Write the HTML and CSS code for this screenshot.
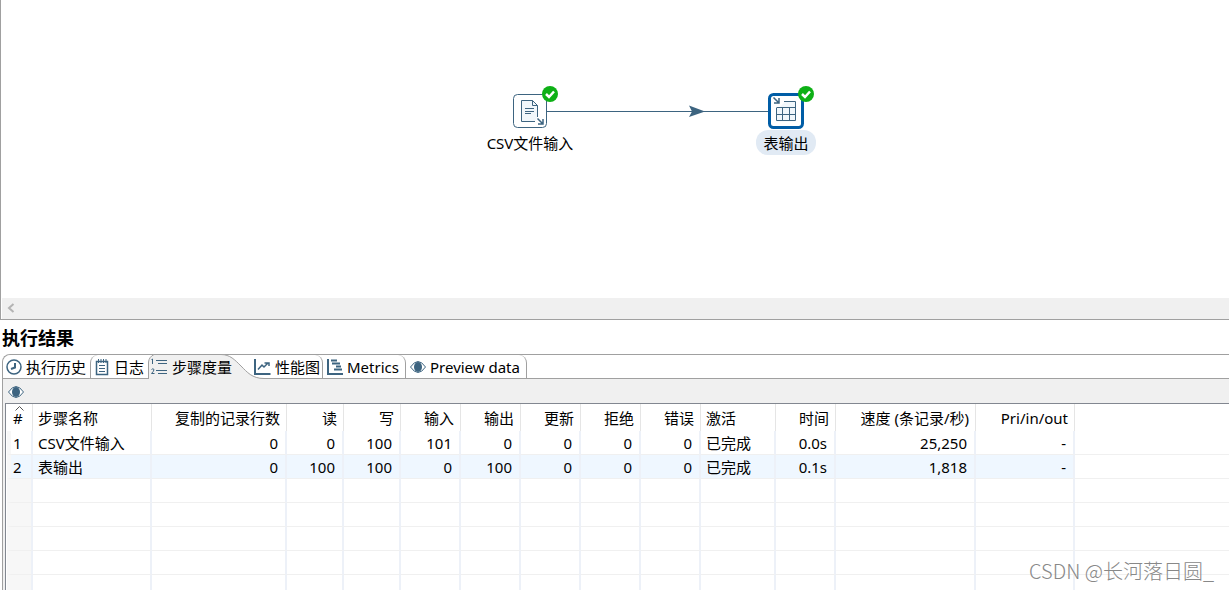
FILE: index.html
```html
<!DOCTYPE html>
<html lang="zh-CN">
  <head>
    <meta charset="utf-8">
    <title>执行结果</title>
    <link rel="stylesheet" href="styles.css">
  </head>
  <body>
    <main class="app">
      <section class="canvas">
        <div class="graph">
          <svg class="hop" width="222" height="12" viewBox="0 0 222 12">
            <path d="M0 6.5H222" stroke="#3d6480" stroke-width="1" />
            <path d="M142 .5L158 6.5L142 12L145 6.5Z" fill="#3d6480" />
          </svg>
          <div class="step step-input">
            <svg class="step-icon" width="46" height="44" viewBox="0 0 46 44">
              <rect x="6.5" y="9.5" width="33" height="33" rx="4" fill="#fff" stroke="#3d6480" />
              <path d="M28 36.5H14.500V15.500H25.500L30.500 20.500V32" fill="#f1f7fb" stroke="#3d6480" />
              <path d="M25.500 15.500V20.500H30.500M18 23.500H27M18 26.500H27M18 28.500H24" fill="none" stroke="#3d6480" />
              <path d="M30.500 33.500L35.500 38.500M36 34V39H31" fill="none" stroke="#3d6480" stroke-width="1.500" />
              <circle cx="43" cy="9" r="8" fill="#0eb016" />
              <path d="M39 9L42 12L47 6.500" fill="none" stroke="#fff" stroke-width="2.500" />
            </svg>
            <span class="step-name">CSV文件输入</span>
          </div>
          <div class="step step-output selected">
            <svg class="step-icon" width="46" height="44" viewBox="0 0 46 44">
              <rect x="6.5" y="9.5" width="33" height="33" rx="4" fill="#fff" stroke="#005da6" stroke-width="3" />
              <path d="M22 16.500H32.500V36.500H13.500V24L18 21Z" fill="#f1f7fb" />
              <path d="M21 16.500H32.500V35.500H13.500V23M13.500 22.500H32.500M13.500 29.500H32.500M19.500 22.500V35.500M26.500 22.500V35.500" fill="none" stroke="#3d6480" />
              <path d="M10.500 12.500L15.500 17.500M16 13V18H11" fill="none" stroke="#3d6480" stroke-width="1.500" />
              <circle cx="43" cy="9" r="8" fill="#0eb016" />
              <path d="M39 9L42 12L47 6.500" fill="none" stroke="#fff" stroke-width="2.500" />
            </svg>
            <span class="step-name">表输出</span>
          </div>
        </div>
        <div class="scrollbar">
          <button class="scroll-left" aria-label="向左滚动">
            <svg width="8" height="10" viewBox="0 0 8 10"><path d="M6.500 1L2 5L6.500 9" fill="none" stroke="#b4b4b4" stroke-width="2" /></svg>
          </button>
        </div>
      </section>

      <section class="results">
        <h1>执行结果</h1>
        <div class="folder">
          <div class="tabs" role="tablist">
            <button class="tab tab-history" role="tab">
              <svg width="16" height="16" viewBox="0 0 16 16"><circle cx="8" cy="8" r="7" fill="none" stroke="#3d6480" stroke-width="1.500" /><path d="M9 4V8.500L5 10" fill="none" stroke="#3d6480" stroke-width="2" /></svg>
              <span>执行历史</span>
            </button>
            <button class="tab tab-log" role="tab">
              <svg width="14" height="16" viewBox="0 0 14 16"><path d="M1.500 2.500H12.500V15.500H1.500Z" fill="none" stroke="#3d6480" stroke-width="1.500" /><path d="M3.500 0V4M6 0V4M8.500 0V4M11 0V4M4 6.500H10M4 9.500H10M4 12.500H10" stroke="#3d6480" /></svg>
              <span>日志</span>
            </button>
            <button class="tab tab-metrics active" role="tab" aria-selected="true">
              <svg class="tab-shape" width="116" height="25" viewBox="0 0 116 25">
                <path d="M.5 25V8Q1 3 6 .5H73C82 .5 87 6 93 12S104 24.500 116 24.500V25Z" fill="#f0f0f0" />
                <path d="M.5 25V8Q1 3 6 .5H73C82 .5 87 6 93 12S104 24.500 116 24.500" fill="none" stroke="#a0a0a0" />
              </svg>
              <svg width="17" height="17" viewBox="0 0 17 17"><path d="M5 2.500H16M7 5.500H16M5 12.500H16M7 15.500H16" stroke="#3d6480" /><path d="M.5 1.500L1.500 1V6M.5 11.500Q2 10 3 11.500Q3 13 .5 15.500H3.500" fill="none" stroke="#3d6480" /></svg>
              <span>步骤度量</span>
            </button>
            <button class="tab tab-chart" role="tab">
              <svg width="17" height="16" viewBox="0 0 17 16"><path d="M1 0V15H16.500" fill="none" stroke="#3d6480" stroke-width="2" /><path d="M4 10.500L8 6L10 8L14 4M10.500 4H15V7" fill="none" stroke="#3d6480" stroke-width="1.500" /></svg>
              <span>性能图</span>
            </button>
            <button class="tab tab-gantt" role="tab">
              <svg width="16" height="16" viewBox="0 0 16 16"><path d="M1 0V15H16" fill="none" stroke="#3d6480" stroke-width="2" /><path d="M4 1.500H10M5 4.500H13M9 7.500H14M7 10.500H15" stroke="#3d6480" stroke-width="2" /></svg>
              <span>Metrics</span>
            </button>
            <button class="tab tab-preview" role="tab">
              <svg width="16" height="12" viewBox="0 0 16 12"><path d="M.5 6Q8-5 15.500 6Q8 17 .5 6Z" fill="#fff" stroke="#3d6480" /><ellipse cx="8" cy="6" rx="4" ry="5" fill="#3d6480" /></svg>
              <span>Preview data</span>
            </button>
          </div>
          <div class="toolbar">
            <button class="show-all" aria-label="显示">
              <svg width="16" height="12" viewBox="0 0 16 12"><path d="M.5 6Q8-5 15.500 6Q8 17 .5 6Z" fill="#fff" stroke="#3d6480" /><ellipse cx="8" cy="6" rx="4" ry="5" fill="#3d6480" /></svg>
            </button>
          </div>
          <div class="grid">
            <table>
              <colgroup>
                <col class="w-num"><col class="w-name"><col class="w-copies">
                <col class="w-rw"><col class="w-rw">
                <col class="w-count"><col class="w-count"><col class="w-count"><col class="w-count"><col class="w-count">
                <col class="w-active"><col class="w-count"><col class="w-speed"><col class="w-prio"><col>
              </colgroup>
              <thead>
                <tr>
                  <th class="sorted">#<svg class="sort" width="9" height="5" viewBox="0 0 9 5"><path d="M.5 4.500L4.500 .5L8.500 4.500" fill="none" stroke="#555" /></svg></th>
                  <th class="text">步骤名称</th>
                  <th>复制的记录行数</th>
                  <th>读</th>
                  <th>写</th>
                  <th>输入</th>
                  <th>输出</th>
                  <th>更新</th>
                  <th>拒绝</th>
                  <th>错误</th>
                  <th class="text">激活</th>
                  <th>时间</th>
                  <th>速度 (条记录/秒)</th>
                  <th>Pri/in/out</th>
                  <th></th>
                </tr>
              </thead>
              <tbody>
                <tr><td>1</td><td class="text">CSV文件输入</td><td>0</td><td>0</td><td>100</td><td>101</td><td>0</td><td>0</td><td>0</td><td>0</td><td class="text">已完成</td><td>0.0s</td><td>25,250</td><td>-</td><td></td></tr>
                <tr class="alt"><td>2</td><td class="text">表输出</td><td>0</td><td>100</td><td>100</td><td>0</td><td>100</td><td>0</td><td>0</td><td>0</td><td class="text">已完成</td><td>0.1s</td><td>1,818</td><td>-</td><td></td></tr>
                <tr class="empty"><td></td><td></td><td></td><td></td><td></td><td></td><td></td><td></td><td></td><td></td><td></td><td></td><td></td><td></td><td></td></tr>
                <tr class="empty"><td></td><td></td><td></td><td></td><td></td><td></td><td></td><td></td><td></td><td></td><td></td><td></td><td></td><td></td><td></td></tr>
                <tr class="empty"><td></td><td></td><td></td><td></td><td></td><td></td><td></td><td></td><td></td><td></td><td></td><td></td><td></td><td></td><td></td></tr>
                <tr class="empty"><td></td><td></td><td></td><td></td><td></td><td></td><td></td><td></td><td></td><td></td><td></td><td></td><td></td><td></td><td></td></tr>
                <tr class="empty"><td></td><td></td><td></td><td></td><td></td><td></td><td></td><td></td><td></td><td></td><td></td><td></td><td></td><td></td><td></td></tr>
              </tbody>
            </table>
          </div>
        </div>
      </section>
      <div class="watermark">CSDN @长河落日圆_</div>
    </main>
  </body>
</html>
```
FILE: styles.css
```css
* {
  box-sizing: border-box;
}
body {
  margin: 0;
  background: #fff;
  color: #000;
  font-family: "Noto Sans", "Noto Sans CJK SC", sans-serif;
  font-size: 15px;
  line-height: 20px;
}
button {
  border: 0;
  padding: 0;
  background: none;
  color: inherit;
  font: inherit;
}
svg {
  display: block;
  flex-shrink: 0;
  overflow: visible;
}
.app {
  position: relative;
  display: flex;
  flex-direction: column;
  height: 100vh;
  overflow: hidden;
}

/* transformation canvas */
.canvas {
  border-left: 1px solid #a0a0a0;
  border-bottom: 1px solid #a0a0a0;
}
.graph {
  position: relative;
  height: 298px;
}
.hop {
  position: absolute;
  left: 546px;
  top: 105px;
}
.step {
  position: absolute;
  top: 85px;
  width: 120px;
  display: flex;
  flex-direction: column;
  align-items: center;
}
.step-input {
  left: 469px;
}
.step-output {
  left: 725px;
}
.step-name {
  margin-top: 1px;
  padding: 3px 7px 2px;
  border-radius: 12px;
}
.selected .step-name {
  background: #e1eaf4;
}
.scrollbar {
  display: flex;
  align-items: flex-start;
  height: 21px;
  margin-left: 1px;
  padding: 5px;
  background: #f0f0f0;
}

/* results */
.results {
  display: flex;
  flex: 1;
  flex-direction: column;
  min-height: 0;
}
h1 {
  margin: 0;
  padding: 5px 2px 3px;
  font-size: 18px;
  line-height: 26px;
}
.folder {
  display: flex;
  flex: 1;
  flex-direction: column;
  min-height: 0;
  margin-left: 2px;
  border-top: 1px solid #a0a0a0;
  border-left: 1px solid #a0a0a0;
  border-top-left-radius: 8px;
  background: #f0f0f0;
}
.tabs {
  display: flex;
  height: 24px;
  border-bottom: 1px solid #a0a0a0;
  border-top-left-radius: 8px;
  background: #fff;
}
.tab {
  position: relative;
  display: flex;
  align-items: center;
  gap: 4px;
  height: 23px;
  padding-left: 3px;
  white-space: nowrap;
}
.tab-history {
  width: 87px;
}
.tab-log {
  width: 58px;
  gap: 5px;
  padding-left: 4px;
  border-left: 1px solid #a0a0a0;
  border-top-left-radius: 8px;
}
.tab-metrics {
  width: 103px;
}
.tab-metrics > * {
  position: relative;
}
.tab-metrics .tab-shape {
  position: absolute;
  top: -1px;
  left: 0;
}
.tab-chart {
  width: 72px;
}
.tab-gantt {
  width: 83px;
}
.tab-preview {
  width: 121px;
}
.tab-chart,
.tab-gantt,
.tab-preview {
  border-right: 1px solid #a0a0a0;
  border-top-right-radius: 8px;
}
.tab-gantt,
.tab-preview {
  padding-left: 4px;
}
.toolbar {
  display: flex;
  height: 24px;
  padding: 2px 5px 0;
}
.grid {
  flex: 1;
  min-height: 0;
  margin-left: 2px;
  overflow: hidden;
  border-top: 1px solid #828790;
  border-left: 1px solid #828790;
  background: #fff;
}
table {
  width: 100%;
  border-spacing: 0;
  border-left: 1px solid #fff;
  table-layout: fixed;
}
.w-num { width: 26px; }
.w-name { width: 119px; }
.w-copies { width: 135px; }
.w-rw { width: 57px; }
.w-count { width: 60px; }
.w-active { width: 75px; }
.w-speed { width: 140px; }
.w-prio { width: 99px; }
th {
  position: relative;
  height: 27px;
  padding: 1px 6px 0 0;
  border-right: 1px solid #e5e5e5;
  font-weight: normal;
  text-align: right;
  white-space: nowrap;
}
td {
  height: 24px;
  padding: 0 7px 0 0;
  border-right: 2px solid #edf1f8;
  border-bottom: 1px solid #f0f0f0;
  text-align: right;
  white-space: nowrap;
}
th.text,
td.text {
  padding-left: 5px;
  text-align: left;
}
th:first-child,
td:first-child {
  padding-right: 0;
  padding-left: 6px;
  text-align: left;
}
tbody td:first-child {
  border-left: 4px solid #f7f7f7;
  padding-left: 2px;
}
th:last-child,
td:last-child {
  border-right: 0;
}
.sort {
  position: absolute;
  top: 2px;
  left: 8px;
}
.alt td:not(:last-child) {
  background: #eff7ff;
}
.empty td:first-child {
  background: #f7f7f7;
}

.watermark {
  position: absolute;
  right: 15px;
  bottom: 7px;
  color: #888;
  font-family: "Noto Sans CJK SC", sans-serif;
  font-size: 20px;
  font-weight: 300;
  line-height: 24px;
}
```
